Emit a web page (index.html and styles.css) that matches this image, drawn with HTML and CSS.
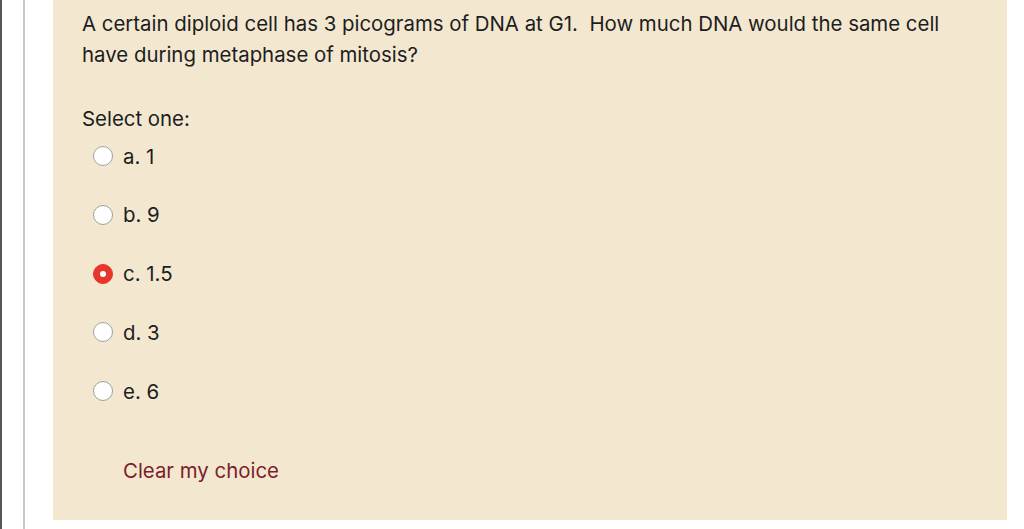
FILE: index.html
```html
<!DOCTYPE html>
<html>
<head>
<meta charset="utf-8">
<link rel="stylesheet" href="styles.css">
</head>
<body>
<div class="page">
  <div class="rule-dark"></div>
  <div class="gap1"></div>
  <div class="rule-gray"></div>
  <div class="gap2"></div>
  <div class="card">
    <p class="question">A certain diploid cell has 3 picograms of DNA at G1.&nbsp; How much DNA would the same cell have during metaphase of mitosis?</p>
    <div class="prompt">Select one:</div>
    <div class="answers">
      <label class="option"><span class="radio"></span><span class="label">a. 1</span></label>
      <label class="option"><span class="radio"></span><span class="label">b. 9</span></label>
      <label class="option"><span class="radio checked"></span><span class="label">c. 1.5</span></label>
      <label class="option"><span class="radio"></span><span class="label">d. 3</span></label>
      <label class="option"><span class="radio"></span><span class="label">e. 6</span></label>
    </div>
    <a class="clear">Clear my choice</a>
  </div>
</div>
</body>
</html>
```
FILE: styles.css
```css
html, body {
  margin: 0;
  padding: 0;
  background: #ffffff;
}
body {
  width: 1024px;
  height: 529px;
  overflow: hidden;
  font-family: Inter, "Liberation Sans", Arial, sans-serif;
  color: #1d1d1f;
}
.page {
  display: flex;
  height: 529px;
}
.rule-dark {
  width: 2px;
  background: #555555;
  flex: none;
}
.gap1 {
  width: 21px;
  flex: none;
}
.rule-gray {
  width: 2px;
  background: #c8c8c8;
  flex: none;
}
.gap2 {
  width: 28px;
  flex: none;
}
.card {
  width: 954px;
  height: 520px;
  background: #f3e8cf;
  box-sizing: border-box;
  padding: 8px 0 0 29px;
  flex: none;
}
.question {
  margin: 0;
  font-size: 20.4px;
  line-height: 31px;
  width: 890px;
}
.prompt {
  margin-top: 35px;
  font-size: 20.4px;
  line-height: 28px;
}
.answers {
  margin-top: 9px;
  display: flex;
  flex-direction: column;
  gap: 30.75px;
}
.option {
  display: flex;
  align-items: center;
  height: 28px;
  font-size: 20.4px;
}
.radio {
  width: 20px;
  height: 20px;
  box-sizing: border-box;
  border-radius: 50%;
  border: 1px solid #a0a0a0;
  background: #ffffff;
  margin-left: 11px;
  margin-right: 10px;
  flex: none;
  position: relative;
}
.radio.checked {
  background: #e8362c;
  border-color: #e8362c;
}
.radio.checked::after {
  content: "";
  position: absolute;
  width: 6px;
  height: 6px;
  border-radius: 50%;
  background: #ffffff;
  left: 6px;
  top: 6px;
}
.clear {
  display: block;
  margin-top: 52px;
  margin-left: 41px;
  font-size: 20.4px;
  line-height: 28px;
  color: #7b1e2c;
}
```
